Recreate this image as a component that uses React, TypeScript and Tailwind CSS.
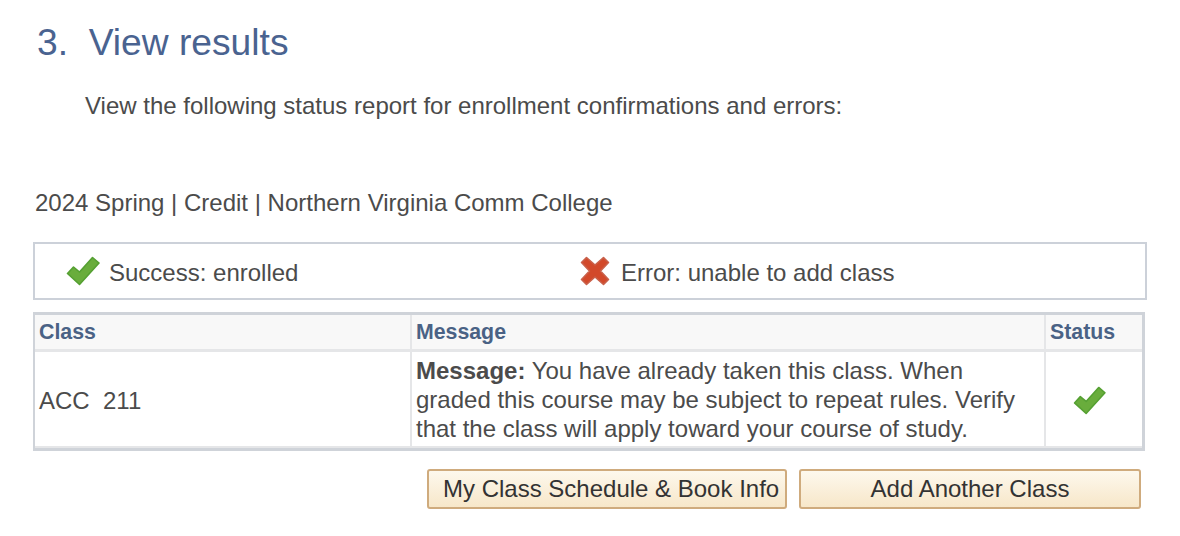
const font = "font-['Liberation_Sans',Arial,sans-serif]";

function Check({ className }: { className: string }) {
  return (
    <svg viewBox="0 0 34 30" className={className}>
      <path d="M1.5 17.5 L7.5 11 L13.5 16 L26.5 1.5 L33 7 L13.5 28.5 Z" fill="#69ad3c" stroke="#55a032" strokeWidth="1.6" strokeLinejoin="round" />
    </svg>
  );
}

function Cross({ className }: { className: string }) {
  return (
    <svg viewBox="0 0 30 30" className={className}>
      <path d="M1.5 6.5 L6.5 1.5 L15 9 L23.5 1.5 L28.5 6.5 L20.5 15 L28.5 23.5 L23.5 28.5 L15 21 L6.5 28.5 L1.5 23.5 L9.5 15 Z" fill="#d2492a" stroke="#c9604a" strokeWidth="1.6" strokeLinejoin="round" />
    </svg>
  );
}

export default function App() {
  return (
    <div className={`${font} w-[1180px] h-[536px] bg-white overflow-hidden pt-[20px] text-[#4b4b4b]`}>
      <h1 className="pl-[37px] text-[37.2px] leading-[44px] text-[#4a6390] whitespace-pre">3.  View results</h1>
      <p className="pl-[85px] mt-[28px] text-[24px] leading-[28px]">
        View the following status report for enrollment confirmations and errors:
      </p>
      <p className="pl-[35px] mt-[69px] text-[24px] leading-[28px]">
        2024 Spring | Credit | Northern Virginia Comm College
      </p>
      <div className="ml-[33px] mt-[25px] w-[1114px] h-[58px] border-2 border-[#ccd1d9] flex items-center text-[24px]">
        <div className="w-[545px] flex items-center pl-[31px] gap-[9px]">
          <Check className="w-[34px] h-[30px]" />
          <span className="pt-[3px]">Success: enrolled</span>
        </div>
        <div className="flex items-center gap-[11px]">
          <Cross className="w-[30px] h-[30px]" />
          <span className="pt-[3px]">Error: unable to add class</span>
        </div>
      </div>
      <div className="ml-[33px] mt-[12px] w-[1112px] h-[139px] border-[3px] border-l-2 border-[#cfd3d9] bg-white">
        <div className="flex h-[37px] bg-[#f8f8f8] border-b-[3px] border-[#e5e6e8] text-[21.3px] leading-[35px] font-bold text-[#4a6285]">
          <div className="w-[377px] pl-[4px] border-r-2 border-[#e5e6e8]">Class</div>
          <div className="w-[634px] pl-[4px] border-r-2 border-[#e5e6e8]">Message</div>
          <div className="flex-1 pl-[4px]">Status</div>
        </div>
        <div className="flex h-[96px] text-[24px] leading-[29px] border-b-2 border-[#e5e6e8]">
          <div className="w-[377px] pl-[4px] pt-[2px] border-r-2 border-[#e5e6e8] flex items-center whitespace-pre">ACC  211</div>
          <div className="w-[634px] pl-[4px] pr-[12px] pt-[4px] border-r-2 border-[#e5e6e8]">
            <b>Message:</b> You have already taken this class. When graded this course may be subject to repeat rules. Verify that the class will apply toward your course of study.
          </div>
          <div className="flex-1 flex items-center justify-center pr-[9px] pt-[2px]">
            <Check className="w-[35px] h-[29px]" />
          </div>
        </div>
      </div>
      <div className="ml-[427px] mt-[18px] flex gap-[12px] text-[24px] text-[#333333]">
        <button className="w-[360px] h-[40px] rounded-[3px] border-2 border-[#cfab7d] bg-gradient-to-b from-[#fdf8ed] to-[#f7e7c9] text-left pl-[14px]">My Class Schedule &amp; Book Info</button>
        <button className="w-[342px] h-[40px] rounded-[3px] border-2 border-[#cfab7d] bg-gradient-to-b from-[#fdf8ed] to-[#f7e7c9] text-center">Add Another Class</button>
      </div>
    </div>
  );
}
